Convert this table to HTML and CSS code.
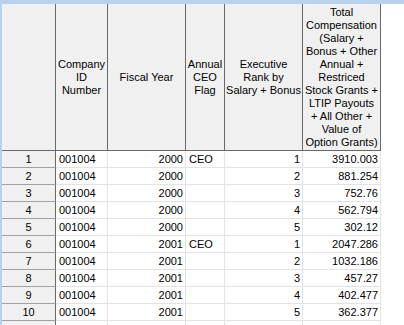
FILE: index.html
```html
<!DOCTYPE html>
<html lang="en">

<head>
  <meta charset="UTF-8">
  <title>Compensation data grid</title>
  <link rel="stylesheet" href="styles.css">
</head>

<body>
  <main class="viewer">
    <div class="grid">
      <!-- header row -->
      <div class="head corner"></div>
      <div class="head">Company<br>ID<br>Number</div>
      <div class="head">Fiscal Year</div>
      <div class="head">Annual<br>CEO<br>Flag</div>
      <div class="head">Executive<br>Rank by<br>Salary + Bonus</div>
      <div class="head">Total<br>Compensation<br>(Salary +<br>Bonus + Other<br>Annual +<br>Restriced<br>Stock Grants +<br>LTIP Payouts<br>+ All Other +<br>Value of<br>Option Grants)</div>

      <div class="row-num">1</div><div class="cell">001004</div><div class="cell num">2000</div><div class="cell">CEO</div><div class="cell num">1</div><div class="cell num">3910.003</div>
      <div class="row-num">2</div><div class="cell">001004</div><div class="cell num">2000</div><div class="cell"></div><div class="cell num">2</div><div class="cell num">881.254</div>
      <div class="row-num">3</div><div class="cell">001004</div><div class="cell num">2000</div><div class="cell"></div><div class="cell num">3</div><div class="cell num">752.76</div>
      <div class="row-num">4</div><div class="cell">001004</div><div class="cell num">2000</div><div class="cell"></div><div class="cell num">4</div><div class="cell num">562.794</div>
      <div class="row-num">5</div><div class="cell">001004</div><div class="cell num">2000</div><div class="cell"></div><div class="cell num">5</div><div class="cell num">302.12</div>
      <div class="row-num">6</div><div class="cell">001004</div><div class="cell num">2001</div><div class="cell">CEO</div><div class="cell num">1</div><div class="cell num">2047.286</div>
      <div class="row-num">7</div><div class="cell">001004</div><div class="cell num">2001</div><div class="cell"></div><div class="cell num">2</div><div class="cell num">1032.186</div>
      <div class="row-num">8</div><div class="cell">001004</div><div class="cell num">2001</div><div class="cell"></div><div class="cell num">3</div><div class="cell num">457.27</div>
      <div class="row-num">9</div><div class="cell">001004</div><div class="cell num">2001</div><div class="cell"></div><div class="cell num">4</div><div class="cell num">402.477</div>
      <div class="row-num">10</div><div class="cell">001004</div><div class="cell num">2001</div><div class="cell"></div><div class="cell num">5</div><div class="cell num">362.377</div>
      <div class="row-num"></div><div class="cell"></div><div class="cell num"></div><div class="cell"></div><div class="cell num"></div><div class="cell num"></div>
    </div>
  </main>
</body>

</html>
```

FILE: styles.css
```css
*,
*::before,
*::after {
  box-sizing: border-box;
}

:root {
  /* COLORS */
  --frame-blue: #b9d1ea;
  --head-gray: #f0f0f0;
  --line-dark: #696969;
  --line-mid: #a0a0a0;
  --line-light: #e3e3e3;
  --text: #000000;

  /* FONT */
  --ff-grid: "Liberation Sans", Arial, sans-serif;
}

body {
  margin: 0;
  height: 325px;
  overflow: hidden;
  background-color: #ffffff;
}

.viewer {
  height: 100%;
  border-top: 4px solid var(--frame-blue);
  border-left: 2px solid var(--frame-blue);
}

.grid {
  display: grid;
  grid-template-columns: 54px 52px 78px 39px 78px 78px;
  grid-template-rows: 147px;
  grid-auto-rows: 17px;

  width: max-content;

  font-family: var(--ff-grid);
  font-size: 11px;
  color: var(--text);
}

.head {
  display: flex;
  align-items: center;
  justify-content: center;

  line-height: 13px;
  text-align: center;
  white-space: nowrap;

  border-right: 1px solid var(--line-dark);
  border-bottom: 1px solid var(--line-dark);
  background-color: var(--head-gray);
}

.row-num {
  padding-top: 1px;

  line-height: 15px;
  text-align: center;

  border-right: 1px solid var(--line-dark);
  border-bottom: 1px solid var(--line-mid);
  background-color: var(--head-gray);
}

.cell {
  padding: 1px 3px 0;

  line-height: 15px;
  white-space: nowrap;

  border-right: 1px solid var(--line-light);
  border-bottom: 1px solid var(--line-light);
}

.num {
  padding-inline: 0 2px;
  text-align: right;
}
```
